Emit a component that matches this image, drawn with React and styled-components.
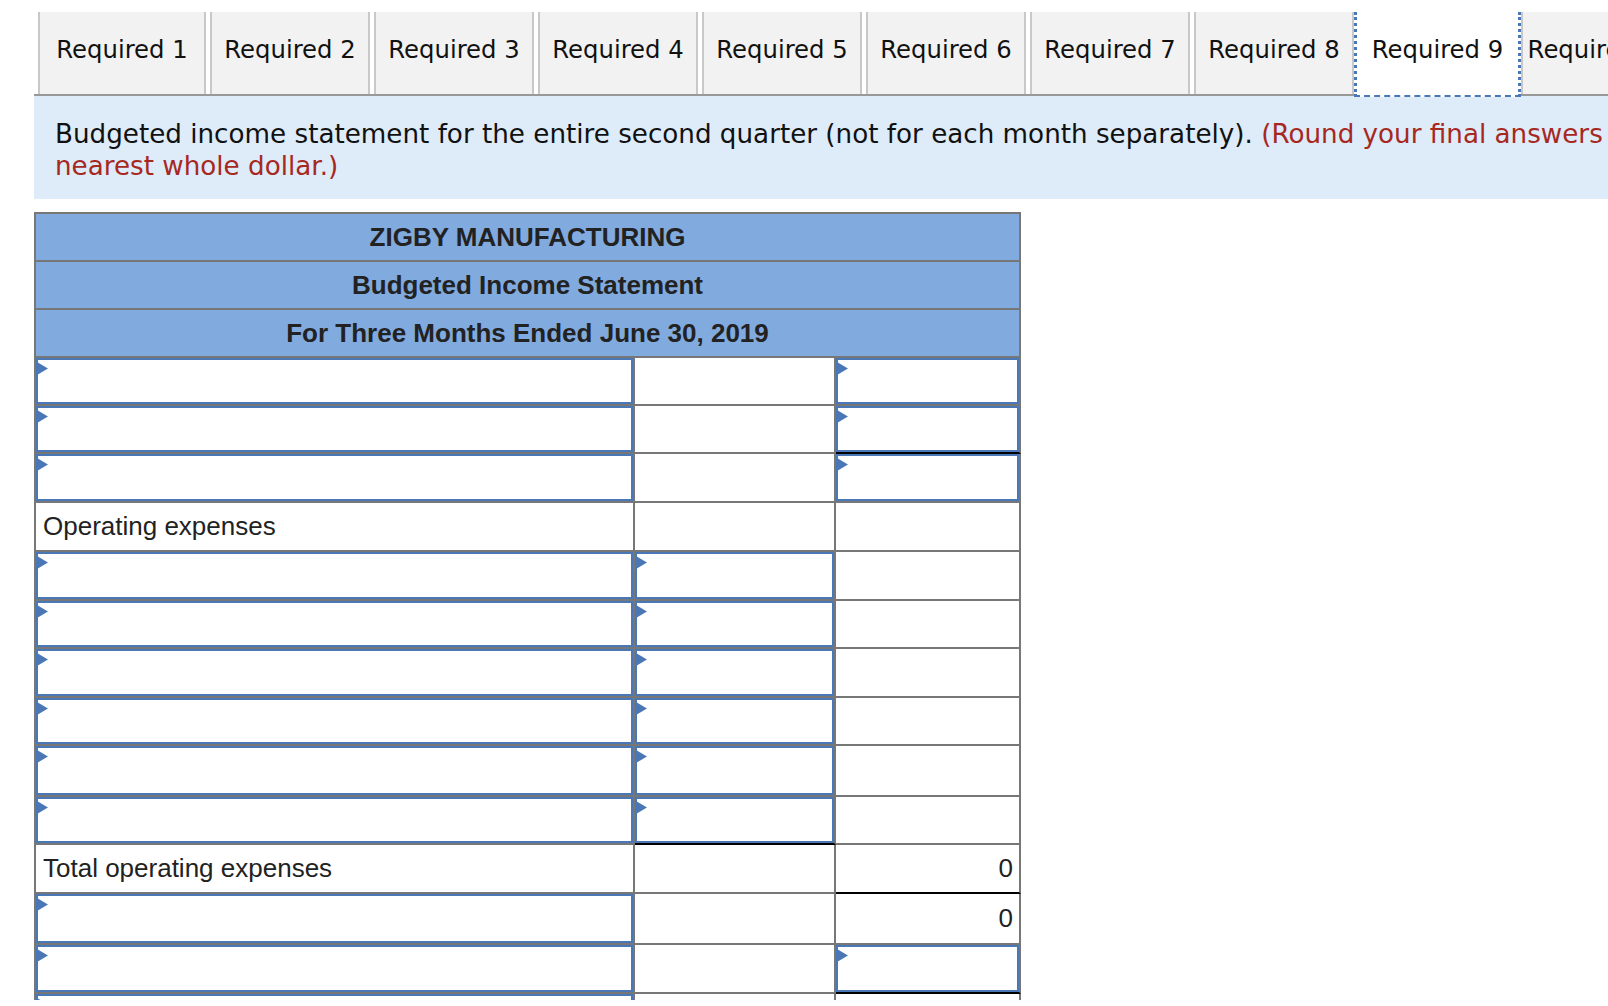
import React from 'react';
import styled, { createGlobalStyle } from 'styled-components';

const GlobalStyle = createGlobalStyle`
  html, body {
    margin: 0;
    padding: 0;
    background: #fff;
    overflow: hidden;
  }
`;

const tabs = [
  'Required 1',
  'Required 2',
  'Required 3',
  'Required 4',
  'Required 5',
  'Required 6',
  'Required 7',
  'Required 8',
  'Required 9',
  'Required 10',
];
const activeTab = 8;

const headerRows = [
  'ZIGBY MANUFACTURING',
  'Budgeted Income Statement',
  'For Three Months Ended June 30, 2019',
];

// each cell: 'in' = answer box, '' = empty, { label } or { num }
// rule = index of the cell that gets a black bottom line
const bodyRows = [
  { h: 48, cells: ['in', '', 'in'] },
  { h: 48, cells: ['in', '', 'in'], rule: 2 },
  { h: 49, cells: ['in', '', 'in'] },
  { h: 49, cells: [{ label: 'Operating expenses' }, '', ''] },
  { h: 49, cells: ['in', 'in', ''] },
  { h: 48, cells: ['in', 'in', ''] },
  { h: 49, cells: ['in', 'in', ''] },
  { h: 48, cells: ['in', 'in', ''] },
  { h: 51, cells: ['in', 'in', ''] },
  { h: 48, cells: ['in', 'in', ''], rule: 1 },
  { h: 49, cells: [{ label: 'Total operating expenses' }, '', { num: '0' }], rule: 2 },
  { h: 51, cells: ['in', '', { num: '0' }] },
  { h: 49, cells: ['in', '', 'in'], rule: 2 },
  { h: 48, cells: ['in', '', ''] },
];

const colWidths = [599, 201, 185];

const App = () => {
  return (
    <Page>
      <GlobalStyle />
      <TabBar>
        {tabs.map((t, i) => (
          <Tab key={t} $first={i === 0} $active={i === activeTab}>
            {t}
          </Tab>
        ))}
      </TabBar>

      <Instructions>
        Budgeted income statement for the entire second quarter (not for each month separately).{' '}
        <Hint>
          (Round your final answers to the
          <br />
          nearest whole dollar.)
        </Hint>
      </Instructions>

      <TableClip>
        <Sheet>
          <colgroup>
            {colWidths.map((w, i) => (
              <Col key={i} $w={w} />
            ))}
          </colgroup>
          <tbody>
            {headerRows.map(text => (
              <Row key={text} $h={48}>
                <HeadCell colSpan={3}>{text}</HeadCell>
              </Row>
            ))}
            {bodyRows.map((row, r) => (
              <Row key={r} $h={row.h}>
                {row.cells.map((cell, c) => (
                  <Cell key={c} $rule={row.rule === c}>
                    {cell === 'in' && (
                      <AnswerBox $h={row.h - 2}>
                        <Marker />
                      </AnswerBox>
                    )}
                    {cell.label && <Label>{cell.label}</Label>}
                    {cell.num && <Amount>{cell.num}</Amount>}
                  </Cell>
                ))}
              </Row>
            ))}
          </tbody>
        </Sheet>
      </TableClip>
    </Page>
  );
};

const Page = styled.div`
  width: 1608px;
  height: 1006px;
  overflow: hidden;
`;

const TabBar = styled.div`
  display: flex;
  align-items: flex-start;
  height: 82px;
  margin-left: 34px;
  padding: 12px 0 0 4px;
  border-bottom: 2px solid #999;
`;

const Tab = styled.div`
  flex-shrink: 0;
  box-sizing: border-box;
  display: flex;
  align-items: center;
  justify-content: center;
  width: ${p => (p.$first ? 168 : p.$active ? 167 : 160)}px;
  height: ${p => (p.$active ? 85 : 82)}px;
  margin-left: ${p => (p.$active ? -4 : 0)}px;
  margin-right: ${p => (p.$active ? 0 : 4)}px;
  padding-bottom: ${p => (p.$active ? 9 : 7)}px;
  background: ${p => (p.$active ? '#fff' : '#f2f2f2')};
  border-left: ${p => (p.$active ? '3px dotted #4a78b6' : '2px solid #c8c8c8')};
  border-right: ${p => (p.$active ? '3px dotted #4a78b6' : '2px solid #c8c8c8')};
  border-bottom: ${p => (p.$active ? '2px dashed #4a78b6' : 'none')};
  position: ${p => (p.$active ? 'relative' : 'static')};
  z-index: ${p => (p.$active ? 1 : 'auto')};
  font-family: 'DejaVu Sans', Verdana, sans-serif;
  font-size: 24.3px;
  color: #111;
  white-space: nowrap;
`;

const Instructions = styled.div`
  width: 1900px;
  margin-left: 34px;
  padding: 22px 0 17px 21px;
  background: #deebf8;
  font-family: 'DejaVu Sans', Verdana, sans-serif;
  font-size: 26.2px;
  line-height: 32px;
  color: #111;
  white-space: nowrap;
`;

const Hint = styled.span`
  color: #a6281f;
`;

const TableClip = styled.div`
  margin: 13px 0 0 34px;
  height: 788px;
  overflow: hidden;
`;

const Sheet = styled.table`
  table-layout: fixed;
  width: 987px;
  border-collapse: separate;
  border-spacing: 0;
  border-top: 2px solid #777;
  border-left: 2px solid #777;
  font-family: 'Liberation Sans', Arial, sans-serif;
  font-size: 26px;
  color: #222;
`;

const Col = styled.col`
  width: ${p => p.$w}px;
`;

const Row = styled.tr`
  height: ${p => p.$h}px;
`;

const HeadCell = styled.td`
  padding: 0;
  background: #81aadf;
  border-right: 2px solid #777;
  border-bottom: 2px solid #777;
  text-align: center;
  vertical-align: middle;
  font-weight: bold;
`;

const Cell = styled.td`
  padding: 0;
  border-right: 2px solid #777;
  border-bottom: 2px solid ${p => (p.$rule ? '#000' : '#777')};
  vertical-align: middle;
  background: #fff;
`;

const AnswerBox = styled.div`
  position: relative;
  box-sizing: border-box;
  height: ${p => p.$h}px;
  border: 2px solid #4a78b6;
  background: #fff;
`;

const Marker = styled.span`
  position: absolute;
  top: 2px;
  left: -1px;
  width: 11px;
  height: 13px;
  background: #4a78b6;
  clip-path: polygon(0 0, 100% 50%, 0 100%);
`;

const Label = styled.div`
  padding-left: 7px;
  white-space: nowrap;
`;

const Amount = styled.div`
  padding-right: 6px;
  text-align: right;
`;

export default App;
